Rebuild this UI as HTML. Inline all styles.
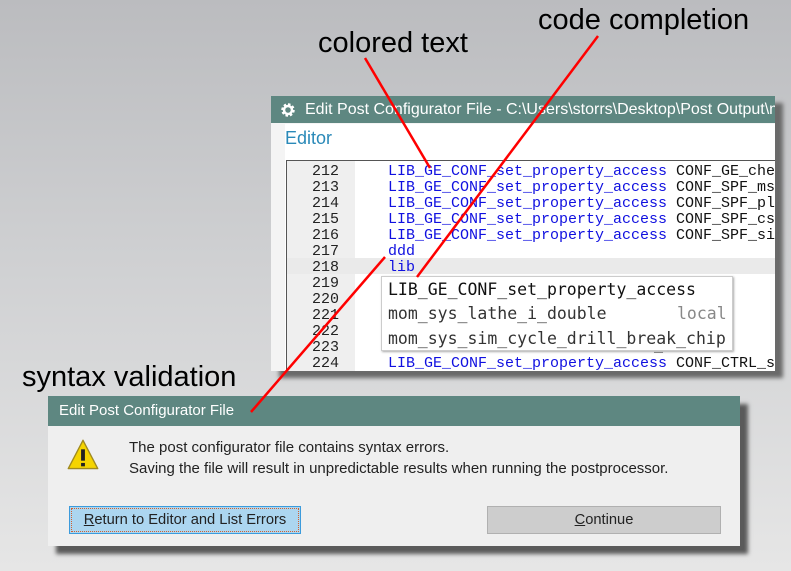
<!DOCTYPE html>
<html><head><meta charset="utf-8"><style>
*{margin:0;padding:0;box-sizing:border-box}
body{width:791px;height:571px;overflow:hidden;position:relative;background:linear-gradient(#bbbcbf 0%,#cfd0d2 45%,#e6e6e6 100%);font-family:"Liberation Sans",sans-serif}
.lbl{position:absolute;font-size:29px;color:#000;white-space:nowrap}
.win{position:absolute;left:271px;top:96px;width:504px;height:275px;background:#f4f4f4;box-shadow:8px 7px 4px #6a6a6a}
.tb{height:27px;background:#5e8781;color:#fff;font-size:16px;line-height:27px;padding-left:34px;white-space:nowrap;overflow:hidden;position:relative}
.ed{position:absolute;left:14px;top:28px;right:0;bottom:0;background:#fff}
.edt{position:absolute;left:0;top:4px;color:#2a89b8;font-size:18px}
.box{position:absolute;left:1px;top:36px;right:0;bottom:0;border:1px solid #555;border-right:none;border-bottom:none;overflow:hidden;background:#fff}
.gut{position:absolute;left:0;top:0;width:68px;bottom:0;background:#efefef}
.ln{position:absolute;left:0;width:52px;text-align:right;font:15px/16px "Liberation Mono",monospace;color:#222}
.cd{position:absolute;left:101px;font:15px/16px "Liberation Mono",monospace;color:#1010e0;white-space:nowrap}
.cd b{font-weight:normal;color:#111}
.pop{position:absolute;left:381px;top:276px;width:352px;height:75px;background:#fff;border:1px solid #ccc;box-shadow:1px 1px 2px #aaa;font:16.5px "DejaVu Sans Mono",monospace;color:#333}
.pop div{position:absolute;left:6px;white-space:nowrap}
.dlg{position:absolute;left:48px;top:396px;width:692px;height:150px;background:#efefef;box-shadow:8px 8px 4px #5a5a5a}
.dtb{height:30px;background:#5e8781;color:#fff;font-size:15px;line-height:30px;padding-left:11px}
.msg{position:absolute;left:81px;top:41px;font-size:15px;line-height:21px;color:#222}
.btn{position:absolute;top:110px;height:28px;font-size:14.7px;line-height:26px;text-align:center;color:#222}
</style></head><body>
<div class="lbl" style="left:318px;top:27px">colored text</div>
<div class="lbl" style="left:538px;top:4px">code completion</div>
<div class="lbl" style="left:22px;top:361px">syntax validation</div>

<div class="win">
 <div class="tb"><svg style="position:absolute;left:9px;top:6px" width="16" height="16" viewBox="0 0 16 16"><circle cx="8" cy="8" r="5" fill="none" stroke="#fff" stroke-width="3.5" stroke-dasharray="2.2 1.7"/><circle cx="8" cy="8" r="4" fill="none" stroke="#fff" stroke-width="2.5"/></svg>Edit Post Configurator File - C:\Users\storrs\Desktop\Post Output\m</div>
 <div class="ed">
  <div class="edt">Editor</div>
  <div class="box">
   <div class="gut"></div>
   <div style="position:absolute;left:0;right:0;top:97px;height:16px;background:#eaeaea"></div>
   <div class="ln" style="top:3px">212<br>213<br>214<br>215<br>216<br>217<br>218<br>219<br>220<br>221<br>222<br>223<br>224</div>
   <div class="cd" style="top:3px">LIB_GE_CONF_set_property_access <b>CONF_GE_che</b><br>LIB_GE_CONF_set_property_access <b>CONF_SPF_ms</b><br>LIB_GE_CONF_set_property_access <b>CONF_SPF_pl</b><br>LIB_GE_CONF_set_property_access <b>CONF_SPF_cs</b><br>LIB_GE_CONF_set_property_access <b>CONF_SPF_si</b><br>ddd<br>lib<br><br>&nbsp;<br><br><br><br>LIB_GE_CONF_set_property_access <b>CONF_CTRL_s</b></div>
   <div class="cd" style="top:131px;left:331px"><b>_B40D_<br>_B40D_<br>_B40D_<br>CTRL_t</b></div>
  </div>
 </div>
</div>
<div class="pop">
 <div style="top:3px;color:#111">LIB_GE_CONF_set_property_access</div>
 <div style="top:27px">mom_sys_lathe_i_double</div>
 <div style="top:27px;left:295px;color:#888">local</div>
 <div style="top:52px">mom_sys_sim_cycle_drill_break_chip</div>
</div>

<div class="dlg">
 <div class="dtb">Edit Post Configurator File</div>
 <svg style="position:absolute;left:18px;top:42px" width="34" height="34" viewBox="0 0 30 30"><path d="M15 2 L28 27 L2 27 Z" fill="#f5d400" stroke="#a08a20" stroke-width="1.2" stroke-linejoin="round"/><rect x="13.3" y="10" width="3.4" height="10" fill="#222"/><rect x="13.3" y="22" width="3.4" height="3" fill="#222"/></svg>
 <div class="msg">The post configurator file contains syntax errors.<br>Saving the file will result in unpredictable results when running the postprocessor.</div>
 <div class="btn" style="left:21px;width:232px;background:#acd6f0;border:1px solid #3c9bdc;outline:1px dotted #d06030;outline-offset:-3px"><u>R</u>eturn to Editor and List Errors</div>
 <div class="btn" style="left:439px;width:234px;background:#cdcdcd;border:1px solid #b0b0b0"><u>C</u>ontinue</div>
</div>

<svg style="position:absolute;left:0;top:0" width="791" height="571"><g stroke="#f00" stroke-width="2.5" fill="none"><line x1="365" y1="58" x2="430" y2="168"/><line x1="598" y1="36" x2="417" y2="277"/><line x1="385" y1="257" x2="251" y2="412"/></g></svg>
</body></html>
